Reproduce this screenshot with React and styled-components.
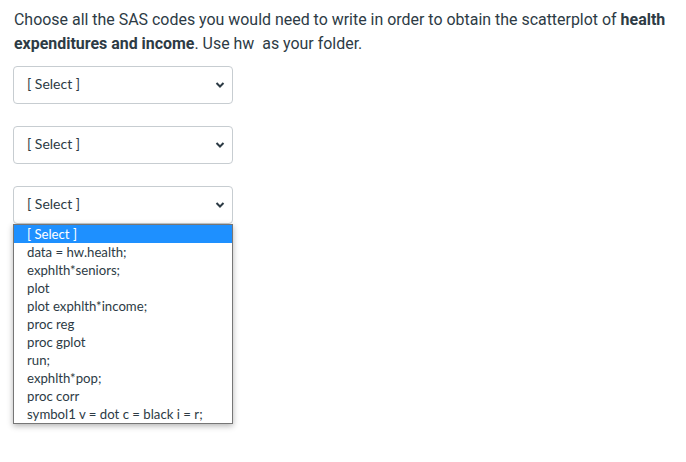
import React from "react";
import styled, { createGlobalStyle } from "styled-components";

const Global = createGlobalStyle`
  html, body { margin: 0; padding: 0; background: #fff; }
  body { font-family: "Lato", sans-serif; }
`;

const Page = styled.div`
  padding: 8px 13px 0 13px;
  width: 686px;
  min-height: 462px;
  box-sizing: border-box;
  background: #fff;
`;

const Question = styled.p`
  margin: 0 0 0 1px;
  font-family: "Roboto", sans-serif;
  font-size: 15.95px;
  line-height: 24px;
  color: #2d3b45;
  b { font-weight: 700; }
`;

const Fields = styled.div`
  margin-top: 10px;
  display: flex;
  flex-direction: column;
  gap: 22px;
  width: 220px;
`;

const SelectWrap = styled.div`
  position: relative;
`;

const SelectBox = styled.div`
  height: 38px;
  box-sizing: border-box;
  border: 1px solid #c7cdd1;
  border-radius: 4px;
  background: #fff;
  display: flex;
  align-items: center;
  justify-content: space-between;
  padding: 0 7px 3px 13px;
  font-family: "Lato", sans-serif;
  font-size: 14px;
  color: #2d3b45;
`;

const Chevron = () => (
  <svg width="10" height="8" viewBox="0 0 10 8" style={{ marginTop: 2 }}>
    <path d="M1.5 2 L5 5.5 L8.5 2" fill="none" stroke="#2d3b45" strokeWidth="2" />
  </svg>
);

const Menu = styled.div`
  position: absolute;
  left: 0;
  top: 38px;
  width: 220px;
  box-sizing: border-box;
  background: #fff;
  border: 1px solid #767676;
  box-shadow: 0 2px 6px rgba(0, 0, 0, 0.3);
  z-index: 2;
  display: flex;
  flex-direction: column;
`;

const MenuItem = styled.div`
  height: 18px;
  line-height: 18px;
  padding-left: 13px;
  font-family: "Lato", sans-serif;
  font-size: 13.2px;
  white-space: nowrap;
  color: ${(p) => (p.$active ? "#fff" : "#2d3b45")};
  background: ${(p) => (p.$active ? "#1e90ff" : "#fff")};
`;

const items = [
  "[ Select ]",
  "data = hw.health;",
  "exphlth*seniors;",
  "plot",
  "plot exphlth*income;",
  "proc reg",
  "proc gplot",
  "run;",
  "exphlth*pop;",
  "proc corr",
  "symbol1 v = dot c = black i = r;",
];

function Dropdown({ open }) {
  return (
    <SelectWrap>
      <SelectBox>
        <span>[ Select ]</span>
        <Chevron />
      </SelectBox>
      {open ? (
        <Menu>
          {items.map((o, i) => (
            <MenuItem key={o} $active={i === 0}>
              {o}
            </MenuItem>
          ))}
        </Menu>
      ) : null}
    </SelectWrap>
  );
}

export default function App() {
  return (
    <>
      <Global />
      <Page>
        <Question>
          Choose all the SAS codes you would need to write in order to obtain the scatterplot of{" "}
          <b>health expenditures and income</b>. Use hw&nbsp; as your folder.
        </Question>
        <Fields>
          <Dropdown />
          <Dropdown />
          <Dropdown open />
        </Fields>
      </Page>
    </>
  );
}
